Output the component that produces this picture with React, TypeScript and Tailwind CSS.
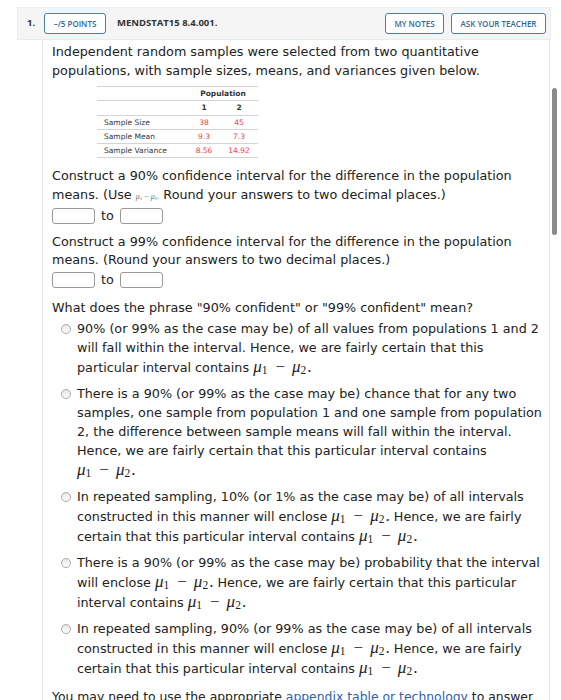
import React from 'react';

const body = { fontFamily: '"DejaVu Sans", Verdana, sans-serif' };
const head = { fontFamily: '"Open Sans", "Liberation Sans", sans-serif' };

const Mu = ({ small }: { small?: boolean }) => (
    <span className={`whitespace-nowrap ${small ? 'text-[8px] text-gray-500' : 'text-[17px] leading-[20px]'}`} style={{ fontFamily: '"Liberation Serif", "DejaVu Serif", serif' }}>
        <i>μ</i><sub className={small ? 'text-[5px]' : 'mr-[1px] text-[11.5px]'}>1</sub>
        <span className={small ? 'mx-[2px]' : 'mx-[7px]'}>−</span>
        <i>μ</i><sub className={small ? 'text-[5px]' : 'mr-[1px] text-[11.5px]'}>2</sub>.
    </span>
);

const Radio = () => (
    <span className="mt-[5px] mr-[6px] inline-block h-[10px] w-[10px] shrink-0 rounded-full border border-[#a9a9a9] bg-gradient-to-b from-[#e6e6e6] to-white" />
);

const Blank = () => <span className="inline-block h-[16px] w-[43px] rounded-[3px] border border-[#9a9a9a] bg-white align-middle" />;

const Option = ({ children }: { children: React.ReactNode }) => (
    <div className="flex pl-[9px] mb-[7px]">
        <Radio />
        <div className="leading-[19px]">{children}</div>
    </div>
);

export default function App() {
    const rows = [
        ['Sample Size', '38', '45'],
        ['Sample Mean', '9.3', '7.3'],
        ['Sample Variance', '8.56', '14.92'],
    ];

    return (
        <div className="relative min-h-screen bg-white pt-[7px] pl-[17px] pr-[10px] text-[#222]">
            {/* header */}
            <div className="flex h-[33px] items-center border border-[#ececec] bg-[#f5f5f5] pl-[9px] pr-[4px] text-[9.5px] font-bold text-[#333]" style={head}>
                <span className="w-[17px]">1.</span>
                <span className="flex h-[21px] w-[62px] items-center justify-center rounded-[3px] border border-[#4a7fa7] bg-white text-[8px] font-semibold text-[#2d6a96]">–/5 POINTS</span>
                <span className="ml-[11px]">MENDSTAT15 8.4.001.</span>
                <span className="ml-auto flex h-[21px] w-[59px] items-center justify-center rounded-[3px] border border-[#4a7fa7] bg-white text-[8px] font-semibold text-[#2d6a96]">MY NOTES</span>
                <span className="ml-[7px] flex h-[21px] w-[95px] items-center justify-center rounded-[3px] border border-[#4a7fa7] bg-white text-[8px] font-semibold text-[#2d6a96]">ASK YOUR TEACHER</span>
            </div>

            {/* body */}
            <div className="ml-[25px] mr-[1px] border-l border-r border-[#e6e6e6] pl-[9px] pr-[6px] pt-[3px] text-[12.75px] leading-[18.5px] text-[#222]" style={body}>
                <p>Independent random samples were selected from two quantitative populations, with sample sizes, means, and variances given below.</p>

                <table className="ml-[45px] mt-[6px] w-[161px] border-collapse text-[7.5px] leading-[10px] text-[#333]" style={body}>
                    <tbody>
                        <tr className="h-[14px] border-t border-b border-[#d4d4d4]">
                            <td className="w-[91px]" />
                            <td colSpan={2} className="text-center font-bold">Population</td>
                        </tr>
                        <tr className="h-[15px] border-b border-[#d4d4d4]">
                            <td />
                            <td className="text-center font-bold">1</td>
                            <td className="text-center font-bold">2</td>
                        </tr>
                        {rows.map(r => (
                            <tr key={r[0]} className="h-[14px] border-b border-[#d4d4d4]">
                                <td className="pl-[7px]">{r[0]}</td>
                                <td className="w-[32px] text-center text-[#e8474c]">{r[1]}</td>
                                <td className="text-center text-[#e8474c]">{r[2]}</td>
                            </tr>
                        ))}
                    </tbody>
                </table>

                <p className="mt-[9px]">Construct a 90% confidence interval for the difference in the population means. (Use <Mu small /> Round your answers to two decimal places.)</p>
                <div className="mt-[1px] flex items-center gap-[6px]"><Blank /><span>to</span><Blank /></div>

                <p className="mt-[7px]">Construct a 99% confidence interval for the difference in the population means. (Round your answers to two decimal places.)</p>
                <div className="mt-[1px] flex items-center gap-[6px]"><Blank /><span>to</span><Blank /></div>

                <p className="mt-[10px] mb-[1px]">What does the phrase "90% confident" or "99% confident" mean?</p>

                <Option>90% (or 99% as the case may be) of all values from populations 1 and 2 will fall within the interval. Hence, we are fairly certain that this particular interval contains <Mu /></Option>
                <Option>There is a 90% (or 99% as the case may be) chance that for any two samples, one sample from population 1 and one sample from population 2, the difference between sample means will fall within the interval. Hence, we are fairly certain that this particular interval contains <Mu /></Option>
                <Option>In repeated sampling, 10% (or 1% as the case may be) of all intervals constructed in this manner will enclose <Mu /> Hence, we are fairly certain that this particular interval contains <Mu /></Option>
                <Option>There is a 90% (or 99% as the case may be) probability that the interval will enclose <Mu /> Hence, we are fairly certain that this particular interval contains <Mu /></Option>
                <Option>In repeated sampling, 90% (or 99% as the case may be) of all intervals constructed in this manner will enclose <Mu /> Hence, we are fairly certain that this particular interval contains <Mu /></Option>

                <p className="mt-[10px] text-[12.4px]">You may need to use the appropriate <span className="text-[#2b5fb3]">appendix table or technology</span> to answer this question.</p>
            </div>

            {/* scrollbar */}
            <div className="absolute right-[4px] top-[88px] h-[147px] w-[5px] rounded-full bg-[#8a8a8a]" />
        </div>
    );
}
